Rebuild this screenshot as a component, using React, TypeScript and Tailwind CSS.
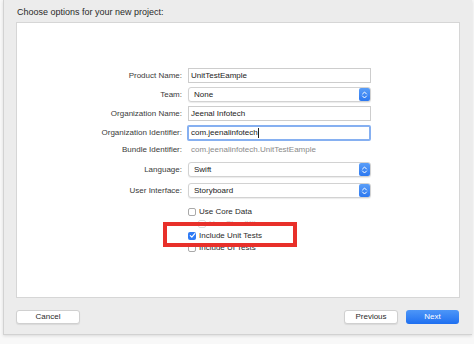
import React from "react";

function Label({ children }: { children: React.ReactNode }) {
  return (
    <div className="w-[120px] shrink-0 text-right text-[8px] leading-[10px] text-[#3a3a3a] whitespace-nowrap">
      {children}
    </div>
  );
}

function Stepper() {
  return (
    <div className="w-[11px] h-[13px] mr-[0px] rounded-[2px] bg-gradient-to-b from-[#5a9ef8] to-[#2c78f0] flex items-center justify-center">
      <svg width="7" height="10" viewBox="0 0 7 10" fill="none">
        <path d="M1.5 4 L3.5 2 L5.5 4" stroke="white" strokeWidth="1" strokeLinecap="round" strokeLinejoin="round" />
        <path d="M1.5 6 L3.5 8 L5.5 6" stroke="white" strokeWidth="1" strokeLinecap="round" strokeLinejoin="round" />
      </svg>
    </div>
  );
}

function Popup({ value }: { value: string }) {
  return (
    <div className="w-[183px] h-[15px] rounded-[3px] border border-[#d2d2d2] bg-white shadow-[0_1px_1px_rgba(0,0,0,0.08)] flex items-center justify-between pl-[5px]">
      <span className="text-[8px] leading-[10px] text-[#222]">{value}</span>
      <Stepper />
    </div>
  );
}

function Field({ value }: { value: string }) {
  return (
    <div className="w-[183px] h-[15px] border border-[#cdcdcd] bg-white flex items-center pl-[2px]">
      <span className="text-[8px] leading-[10px] text-[#222]">{value}</span>
    </div>
  );
}

function Check({ checked, faded }: { checked?: boolean; faded?: boolean }) {
  if (checked) {
    return (
      <div className="w-[8px] h-[8px] rounded-[2px] bg-[#2f7bf5] flex items-center justify-center shrink-0">
        <svg width="7" height="7" viewBox="0 0 7 7" fill="none">
          <path d="M1.3 3.6 L2.8 5.1 L5.8 1.6" stroke="white" strokeWidth="1.2" strokeLinecap="round" strokeLinejoin="round" />
        </svg>
      </div>
    );
  }
  return (
    <div
      className={
        faded
          ? "w-[8px] h-[8px] rounded-[2px] border border-[#dedede] bg-white shrink-0"
          : "w-[8px] h-[8px] rounded-[2px] border border-[#a9a9a9] bg-white shrink-0"
      }
    />
  );
}

export default function App() {
  return (
    <div className="w-[474px] h-[344px] bg-[#f8f8f8] overflow-hidden font-['Liberation_Sans',Arial,sans-serif]">
      <div className="ml-[3px] w-[469px] h-[335px] bg-[#ececec] border-l border-b border-[#d2d2d2] shadow-[0_1px_3px_rgba(0,0,0,0.12)] flex flex-col">
        <div className="h-[22px] pl-[13px] pt-[6px]">
          <div className="text-[9px] leading-[12px] text-[#2a2a2a]">Choose options for your new project:</div>
        </div>
        <div className="relative ml-[12px] w-[444px] h-[276px] bg-white border border-[#d6d6d6] pt-[45px] pl-[45px] flex flex-col">
          <div className="flex items-center gap-[6px]">
            <Label>Product Name:</Label>
            <Field value="UnitTestEample" />
          </div>
          <div className="mt-[4px] flex items-center gap-[6px]">
            <Label>Team:</Label>
            <Popup value="None" />
          </div>
          <div className="mt-[4px] flex items-center gap-[6px]">
            <Label>Organization Name:</Label>
            <Field value="Jeenal Infotech" />
          </div>
          <div className="mt-[4px] flex items-center gap-[6px]">
            <Label>Organization Identifier:</Label>
            <div className="w-[184px] h-[16px] -ml-[1px] rounded-[2px] border-2 border-[#86b0f1] bg-white flex items-center pl-[2px]">
              <span className="text-[8px] leading-[10px] text-[#222]">com.jeenalinfotech</span>
              <span className="w-px h-[10px] bg-[#222]" />
            </div>
          </div>
          <div className="mt-[2px] h-[14px] flex items-center gap-[6px]">
            <Label>Bundle Identifier:</Label>
            <span className="pl-[3px] text-[8px] leading-[10px] text-[#8a8a8a] whitespace-nowrap">com.jeenalinfotech.UnitTestEample</span>
          </div>
          <div className="mt-[5px] flex items-center gap-[6px]">
            <Label>Language:</Label>
            <Popup value="Swift" />
          </div>
          <div className="mt-[6px] flex items-center gap-[6px]">
            <Label>User Interface:</Label>
            <Popup value="Storyboard" />
          </div>
          <div className="mt-[8px] h-[11px] pl-[126px] flex items-center gap-[3px]">
            <Check />
            <span className="text-[8px] leading-[10px] text-[#2a2a2a]">Use Core Data</span>
          </div>
          <div className="mt-[1px] h-[11px] pl-[136px] flex items-center gap-[3px]">
            <Check faded />
            <span className="text-[8px] leading-[10px] text-[#c8c8c8]">Use CloudKit</span>
          </div>
          <div className="mt-[1px] h-[11px] pl-[126px] flex items-center gap-[3px]">
            <Check checked />
            <span className="text-[8px] leading-[10px] text-[#2a2a2a]">Include Unit Tests</span>
          </div>
          <div className="mt-[1px] h-[11px] pl-[126px] flex items-center gap-[3px]">
            <Check />
            <span className="text-[8px] leading-[10px] text-[#2a2a2a]">Include UI Tests</span>
          </div>
          <div className="absolute left-[146px] top-[199px] w-[134px] h-[25px] border-4 border-[#e8302a]" />
        </div>
        <div className="mt-[12px] h-[14px] pl-[12px] pr-[13px] flex items-center justify-between">
          <div className="w-[64px] h-[14px] rounded-[3px] border border-[#d0d0d0] bg-white shadow-[0_1px_1px_rgba(0,0,0,0.08)] flex items-center justify-center text-[8px] leading-[10px] text-[#2a2a2a]">
            Cancel
          </div>
          <div className="flex items-center gap-[8px]">
            <div className="w-[54px] h-[14px] rounded-[3px] border border-[#d0d0d0] bg-white shadow-[0_1px_1px_rgba(0,0,0,0.08)] flex items-center justify-center text-[8px] leading-[10px] text-[#2a2a2a]">
              Previous
            </div>
            <div className="w-[53px] h-[14px] rounded-[3px] bg-gradient-to-b from-[#4d96f8] to-[#1e6ff0] flex items-center justify-center text-[8px] leading-[10px] text-white">
              Next
            </div>
          </div>
        </div>
      </div>
    </div>
  );
}
